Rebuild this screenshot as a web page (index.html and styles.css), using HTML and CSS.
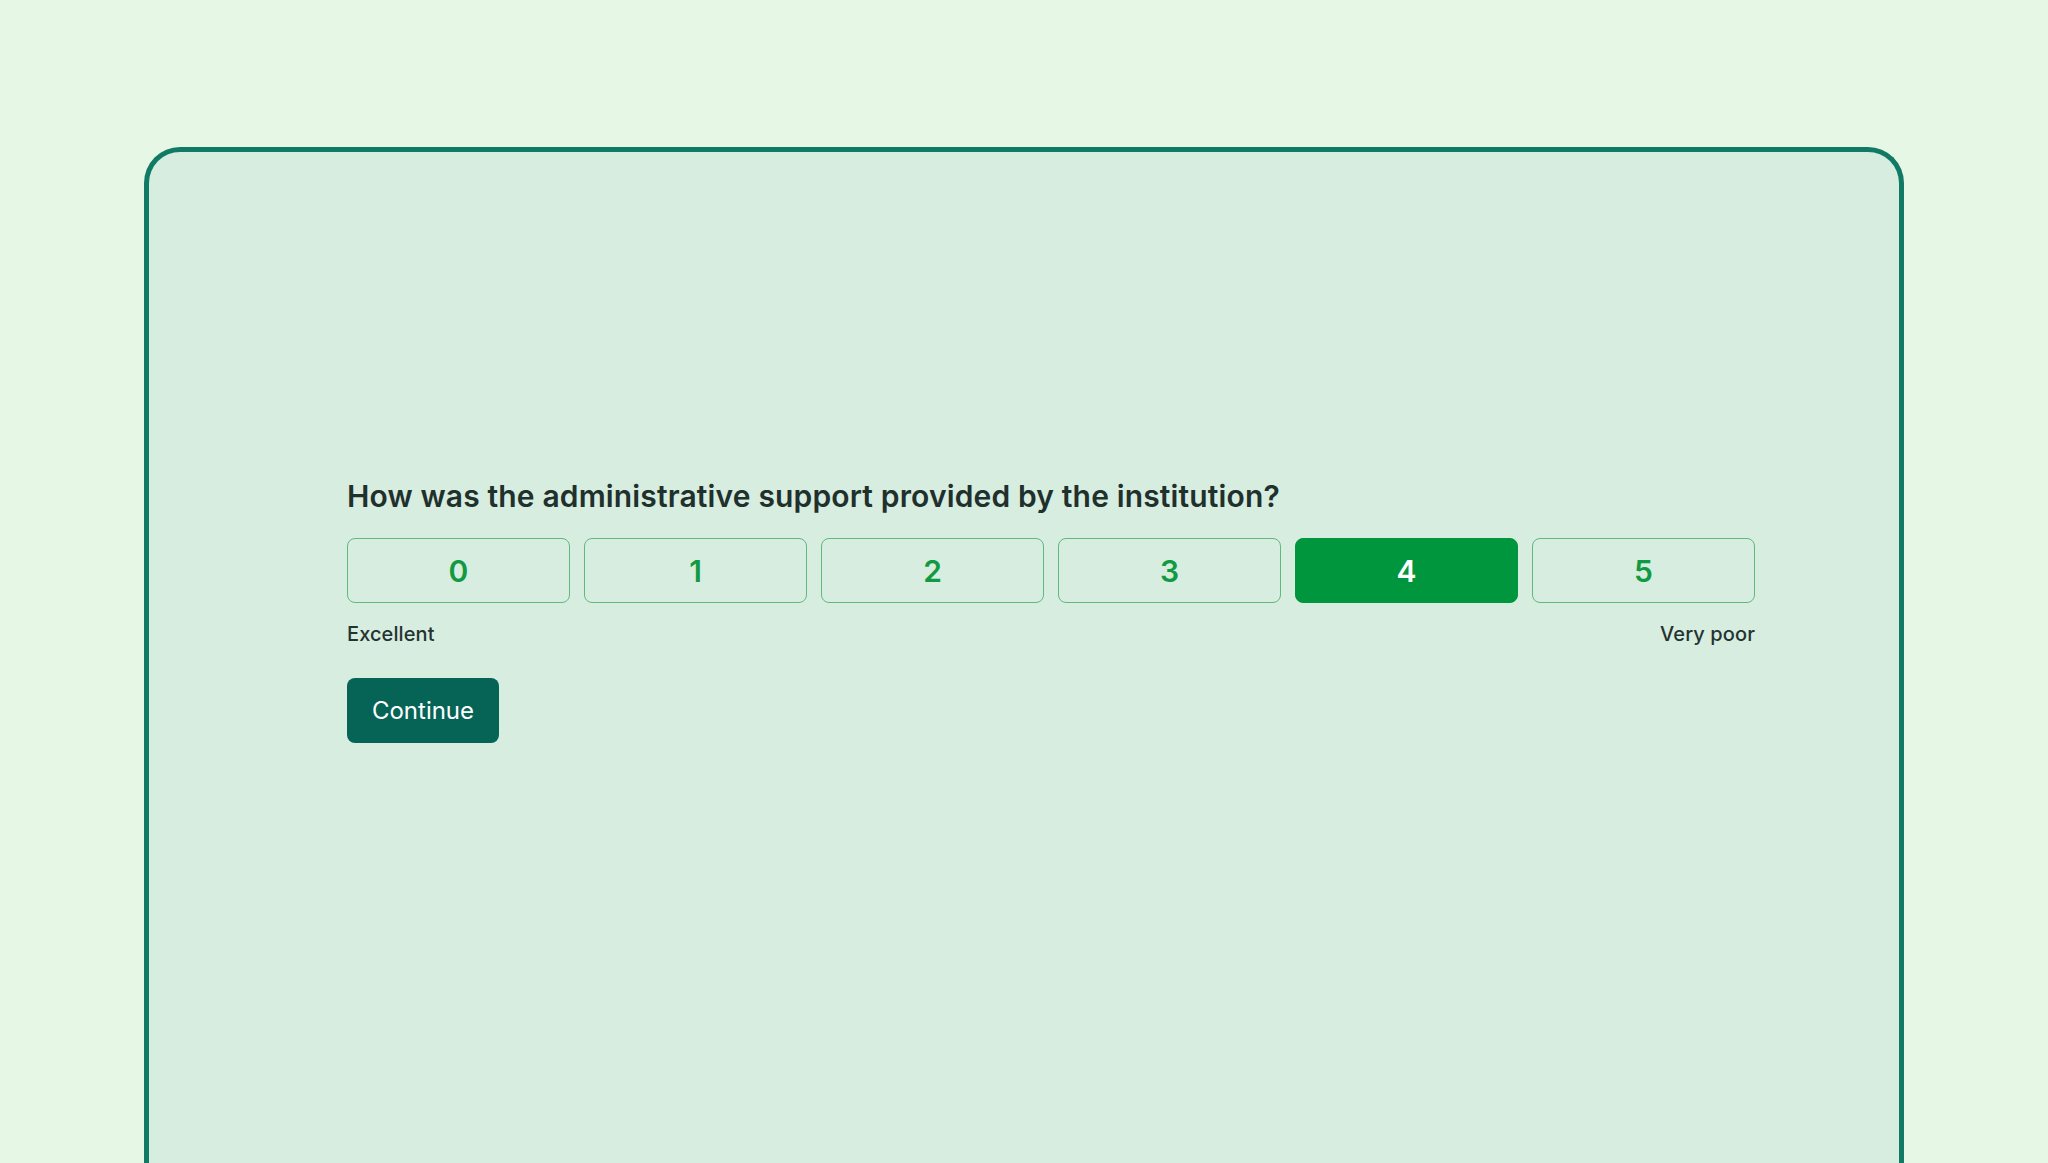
FILE: index.html
```html
<!DOCTYPE html>
<html lang="en">
<head>
<meta charset="utf-8">
<title>Survey</title>
<link rel="stylesheet" href="styles.css">
</head>
<body>
<div class="page">
  <main class="card">
    <section class="survey">
      <h1 class="question">How was the administrative support provided by the institution?</h1>
      <div class="scale">
        <button class="opt">0</button>
        <button class="opt">1</button>
        <button class="opt">2</button>
        <button class="opt">3</button>
        <button class="opt selected">4</button>
        <button class="opt">5</button>
      </div>
      <div class="labels">
        <span>Excellent</span>
        <span>Very poor</span>
      </div>
      <button class="continue">Continue</button>
    </section>
  </main>
</div>
</body>
</html>
```

FILE: styles.css
```css
html, body {
  margin: 0;
  padding: 0;
  height: 100%;
  overflow: hidden;
}
body {
  background: #e7f7e6;
  font-family: Inter, "Noto Sans", "Liberation Sans", sans-serif;
}
.page {
  height: 100%;
  box-sizing: border-box;
  padding: 147px 144px 0 144px;
}
.card {
  box-sizing: border-box;
  width: 1760px;
  height: 1016px;
  background: #d6ede0;
  border: 5px solid #117a64;
  border-bottom: none;
  border-radius: 36px 36px 0 0;
  padding: 326px 0 0 198px;
}
.survey {
  width: 1408px;
}
.question {
  margin: 0;
  font-size: 30px;
  line-height: 36px;
  font-weight: 600;
  letter-spacing: 0.15px;
  color: #1f302d;
}
.scale {
  display: grid;
  grid-template-columns: repeat(6, 1fr);
  gap: 14px;
  margin-top: 24px;
}
.opt {
  height: 65px;
  box-sizing: border-box;
  border: 1.5px solid #62b97e;
  border-radius: 8px;
  background: transparent;
  color: #129a42;
  font-family: inherit;
  font-size: 30px;
  font-weight: 600;
  padding: 0;
}
.opt.selected {
  background: #00963d;
  border-color: #00963d;
  color: #ffffff;
}
.labels {
  display: flex;
  justify-content: space-between;
  margin-top: 19px;
  font-size: 20px;
  line-height: 24px;
  font-weight: 500;
  letter-spacing: 0.1px;
  color: #243330;
}
.continue {
  margin-top: 32px;
  height: 65px;
  width: 152px;
  border: none;
  border-radius: 8px;
  background: #066456;
  color: #ffffff;
  font-family: inherit;
  font-size: 24px;
  font-weight: 400;
  padding: 0;
}
```
